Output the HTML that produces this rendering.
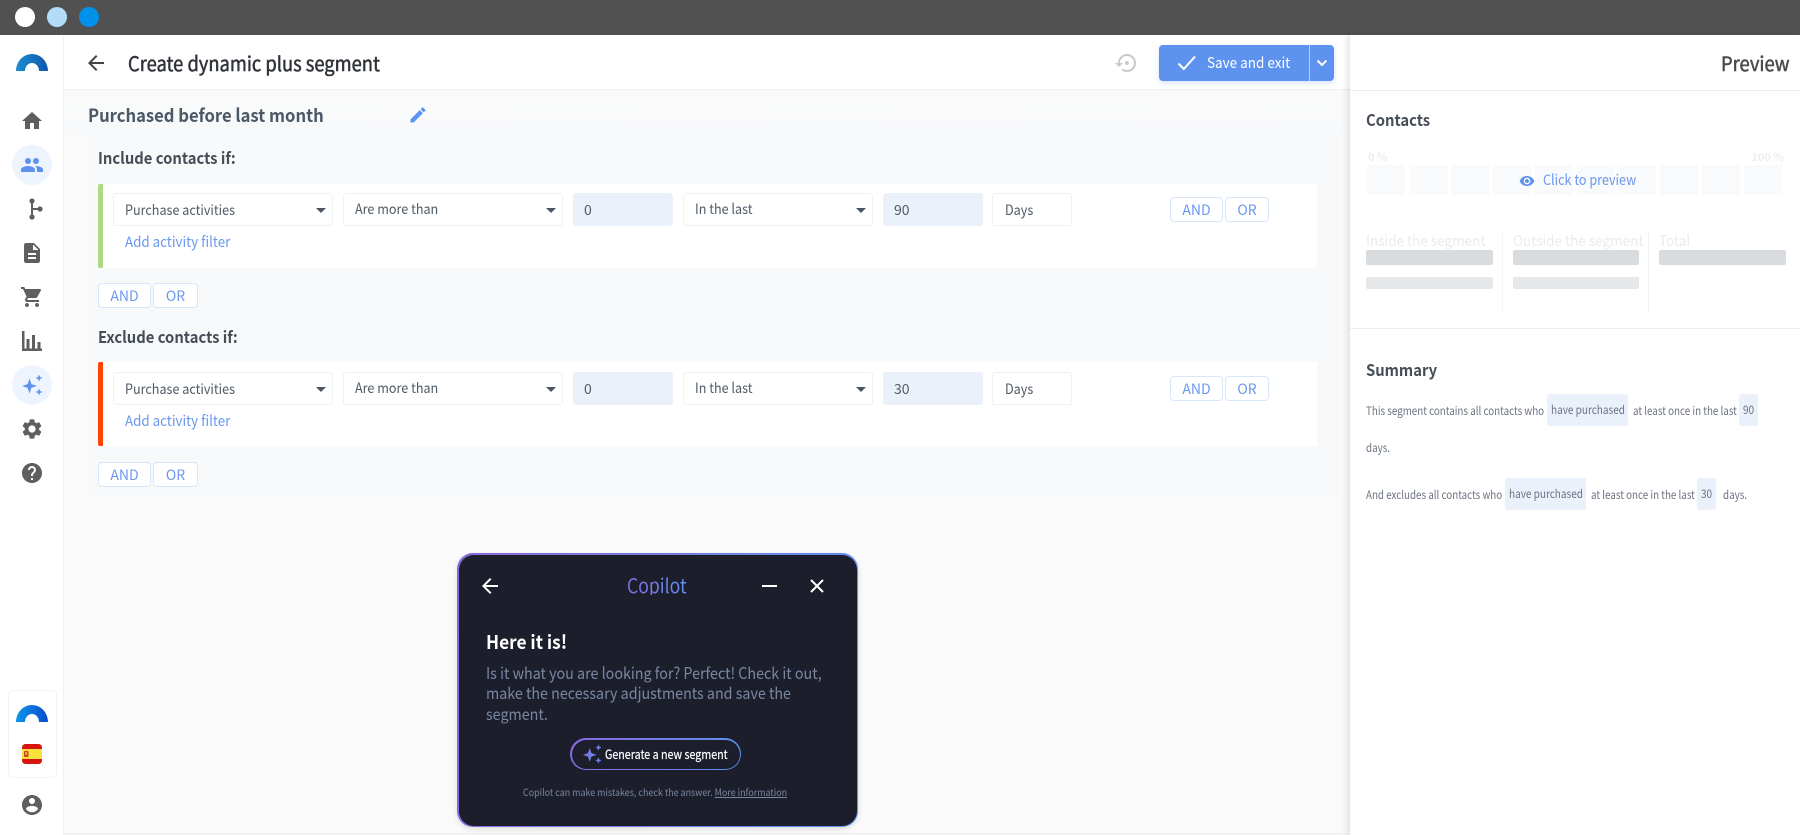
<!DOCTYPE html>
<html lang="en"><head><meta charset="utf-8"><title>Create dynamic plus segment</title>
<style>
*{box-sizing:border-box}
html,body{margin:0;padding:0;width:1800px;height:835px;overflow:hidden;background:#fafafa;font-family:"Noto Sans CJK JP","Liberation Sans",sans-serif;color:#4b5563}
.a{position:absolute}
.t{position:absolute;white-space:nowrap;line-height:20px;height:20px;transform:scaleX(var(--s,1));transform-origin:0 50%}
.r{transform-origin:100% 50%}
.sel,.inp,.days{position:absolute;height:33px;border-radius:3px;font-size:14px;line-height:33px;padding-left:11px;color:#505a66;white-space:nowrap}
.sel span,.days span,.chip span{display:inline-block;transform:scaleX(.9);transform-origin:0 50%}
.sel{background:#fff;border:1px solid #f0f1f3}
.sel.u span{position:relative;top:-1px}
.sel:after{content:"";position:absolute;right:6px;top:14px;border-left:5px solid transparent;border-right:5px solid transparent;border-top:5px solid #4a5560}
.inp{background:#ebf1fb;border:1px solid #ebf1fb;padding-left:10px}
.days{background:#fff;border:1px solid #f0f1f3;padding-left:12px}
.btn{position:absolute;height:25px;border:1px solid #d8e5fb;border-radius:4px;background:#fff;color:#6a97ee;font-size:14px;line-height:25px;text-align:center}
.add{position:absolute;color:#6a97ee;font-size:14.5px;line-height:20px;white-space:nowrap;transform:scaleX(.92);transform-origin:0 50%}
.h{font-size:16px;font-weight:700;color:#454d57;--s:.925}
.sq{position:absolute;top:165px;width:38px;height:30px;background:#f9fafc}
.chip{position:absolute;background:#ebf1fb;border-radius:2px;font-size:11.5px;line-height:32px;height:32px;color:#6b7280;padding-left:4px;white-space:nowrap}
.chip span{transform:scaleX(.87)}
.s{font-size:11.5px;color:#6b7280;--s:.852}
.lbl{font-size:15px;color:#e9ebed;--s:.9}
.md{font-weight:400;-webkit-text-stroke:.5px currentColor}
.p{font-size:16px;color:#7a86a2;--s:.893}
svg{position:absolute;display:block}
</style></head><body>

<div class="a" style="left:0;top:0;width:1800px;height:35px;background:#515151"></div>
<div class="a" style="left:15px;top:7px;width:20px;height:20px;border-radius:50%;background:#fff"></div>
<div class="a" style="left:47px;top:7px;width:20px;height:20px;border-radius:50%;background:#b3dcf9"></div>
<div class="a" style="left:79px;top:7px;width:20px;height:20px;border-radius:50%;background:#0091ea"></div>

<!-- main -->
<div class="a" style="left:63px;top:35px;width:1287px;height:55px;background:#fff;border-bottom:1px solid #eef0f2"></div>
<div class="a" style="left:88px;top:135px;width:1252px;height:362px;background:#f8f9fb"></div>
<div class="a" style="left:63px;top:90px;width:1287px;height:45px;background:linear-gradient(#fafafa,#f8f9fb)"></div>
<div class="a" style="left:63px;top:833px;width:1287px;height:2px;border-top:1px solid #eee;background:#f7f7f7"></div>

<!-- sidebar -->
<div class="a" style="left:0;top:35px;width:64px;height:800px;background:#fff;border-right:1px solid #f0f0f0"></div>
<svg style="left:16px;top:54px" width="32" height="17" viewBox="0 0 32 17"><defs><linearGradient id="l1" x1="0" x2="1" y1="0" y2="0"><stop offset="0" stop-color="#1e8ed0"/><stop offset="1" stop-color="#0f56ab"/></linearGradient></defs><path d="M0 17C0 7.600 7.200 0 16 0s16 7.600 16 17H23C23 12.600 20 9 16 9s-7 3.600-7 8z" fill="url(#l1)"/></svg>
<svg style="left:20px;top:109px" width="24" height="24" viewBox="0 0 24 24" fill="#5f5f5f"><path d="M10 20v-6h4v6h5v-8h3L12 3 2 12h3v8z"/></svg>
<div class="a" style="left:12px;top:145px;width:40px;height:40px;border-radius:50%;background:#eef4fe"></div>
<svg style="left:20px;top:153px" width="24" height="24" viewBox="0 0 24 24" fill="#5e92ee"><path d="M16 11c1.660 0 2.990-1.340 2.990-3S17.660 5 16 5c-1.660 0-3 1.340-3 3s1.340 3 3 3zm-8 0c1.660 0 2.990-1.340 2.990-3S9.660 5 8 5C6.340 5 5 6.340 5 8s1.340 3 3 3zm0 2c-2.330 0-7 1.170-7 3.500V19h14v-2.500c0-2.330-4.670-3.500-7-3.500zm8 0c-.29 0-.62.02-.97.05 1.160.84 1.970 1.970 1.970 3.450V19h6v-2.500c0-2.330-4.670-3.500-7-3.500z"/></svg>
<svg style="left:24px;top:197px" width="20" height="24" viewBox="0 0 20 24" fill="#5f5f5f"><circle cx="8" cy="4" r="2.600"/><circle cx="8" cy="20" r="2.600"/><circle cx="16" cy="12" r="2.600"/><rect x="7" y="4" width="2" height="16"/><rect x="8" y="11" width="8" height="2"/></svg>
<svg style="left:20px;top:241px" width="24" height="24" viewBox="0 0 24 24" fill="#5f5f5f"><path d="M14 2H6c-1.100 0-1.990.9-1.990 2L4 20c0 1.100.89 2 1.990 2H18c1.100 0 2-.9 2-2V8l-6-6zm2 16H8v-2h8v2zm0-4H8v-2h8v2zm-3-5V3.500L18.500 9H13z"/></svg>
<svg style="left:20px;top:285px" width="24" height="24" viewBox="0 0 24 24" fill="#5f5f5f"><path d="M7 18c-1.100 0-1.990.9-1.990 2S5.900 22 7 22s2-.9 2-2-.9-2-2-2zM1 2v2h2l3.600 7.590-1.350 2.450c-.16.28-.25.61-.25.96 0 1.100.9 2 2 2h12v-2H7.420c-.14 0-.25-.11-.25-.25l.03-.12.9-1.630h7.450c.75 0 1.410-.41 1.750-1.030l3.580-6.490c.08-.14.12-.31.12-.48 0-.55-.45-1-1-1H5.210l-.94-2H1zm16 16c-1.100 0-1.990.9-1.990 2s.89 2 1.990 2 2-.9 2-2-.9-2-2-2z"/></svg>
<svg style="left:22px;top:331px" width="20" height="20" viewBox="0 0 20 20" fill="#5f5f5f"><rect x="0" y="0" width="2.500" height="20"/><rect x="0" y="17.500" width="20" height="2.500"/><rect x="4.500" y="8" width="3" height="9.500"/><rect x="10" y="4" width="3" height="13.500"/><rect x="15.500" y="11" width="3" height="6.500"/></svg>
<div class="a" style="left:12px;top:365px;width:40px;height:40px;border-radius:50%;background:#eef4fe"></div>
<svg style="left:20px;top:373px" width="24" height="24" viewBox="0 0 24 24" fill="#5e92ee"><path d="M9.500 5.500L11.400 11.100 17 13 11.400 14.900 9.500 20.500 7.600 14.900 2 13 7.600 11.100z"/><path d="M19 1.500L20 4 22.500 5 20 6 19 8.500 18 6 15.500 5 18 4z"/><path d="M19 15.500L20 18 22.500 19 20 20 19 22.500 18 20 15.500 19 18 18z"/></svg>
<svg style="left:20px;top:417px" width="24" height="24" viewBox="0 0 24 24" fill="#5f5f5f"><path d="M19.140,12.940c0.040-0.300,0.060-0.610,0.060-0.940c0-0.320-0.020-0.640-0.070-0.940l2.030-1.580c0.180-0.140,0.230-0.410,0.120-0.610l-1.920-3.320c-0.120-0.220-0.370-0.290-0.590-0.220l-2.390,0.960c-0.500-0.380-1.030-0.700-1.620-0.940L14.400,2.810c-0.040-0.240-0.240-0.410-0.480-0.410h-3.840c-0.240,0-0.430,0.170-0.470,0.410L9.250,5.350C8.660,5.590,8.120,5.920,7.630,6.290L5.240,5.330c-0.220-0.080-0.470,0-0.590,0.220L2.740,8.870C2.620,9.080,2.660,9.340,2.860,9.480l2.030,1.580C4.840,11.360,4.800,11.690,4.800,12s0.020,0.640,0.070,0.940l-2.030,1.580c-0.180,0.140-0.230,0.410-0.120,0.610l1.920,3.320c0.120,0.220,0.370,0.290,0.590,0.220l2.390-0.960c0.500,0.380,1.030,0.700,1.620,0.940l0.360,2.540c0.050,0.240,0.240,0.410,0.480,0.410h3.840c0.240,0,0.440-0.170,0.470-0.410l0.360-2.540c0.590-0.240,1.130-0.560,1.620-0.940l2.390,0.960c0.220,0.080,0.470,0,0.590-0.220l1.920-3.320c0.120-0.220,0.070-0.470-0.120-0.610L19.140,12.940z M12,15.600c-1.980,0-3.600-1.620-3.600-3.600s1.620-3.600,3.600-3.600s3.600,1.620,3.600,3.600S13.980,15.600,12,15.600z"/></svg>
<svg style="left:20px;top:461px" width="24" height="24" viewBox="0 0 24 24" fill="#5f5f5f"><path d="M12 2C6.480 2 2 6.480 2 12s4.480 10 10 10 10-4.480 10-10S17.520 2 12 2zm1 17h-2v-2h2v2zm2.070-7.750l-.9.920C13.450 12.900 13 13.500 13 15h-2v-.5c0-1.100.45-2.100 1.170-2.830l1.240-1.260c.37-.36.59-.86.59-1.410 0-1.100-.9-2-2-2s-2 .9-2 2H8c0-2.210 1.790-4 4-4s4 1.790 4 4c0 .88-.36 1.680-.93 2.250z"/></svg>

<div class="a" style="left:8px;top:690px;width:49px;height:88px;border:1px solid #f3f3f3;border-radius:5px;background:#fff"></div>
<svg style="left:16px;top:705px" width="32" height="17" viewBox="0 0 32 17"><defs><linearGradient id="l2" x1="0" x2="1" y1="0" y2="0"><stop offset="0" stop-color="#0d96ec"/><stop offset="1" stop-color="#0a4ccb"/></linearGradient></defs><path d="M0 17C0 7.600 7.200 0 16 0s16 7.600 16 17H23C23 12.600 20 9 16 9s-7 3.600-7 8z" fill="url(#l2)"/></svg>
<svg style="left:22px;top:744px" width="20" height="20" viewBox="0 0 20 20"><rect width="20" height="20" rx="3.500" fill="#d8140f"/><rect y="5" width="20" height="10" fill="#fbe23a"/><rect x="2" y="7" width="4.500" height="6" rx="1" fill="#c8402a"/><rect x="3.200" y="8" width="2" height="3" fill="#e8b23a"/></svg>
<svg style="left:20px;top:793px" width="24" height="24" viewBox="0 0 24 24" fill="#5f5f5f"><path d="M12 2C6.480 2 2 6.480 2 12s4.480 10 10 10 10-4.480 10-10S17.520 2 12 2zm0 3c1.660 0 3 1.340 3 3s-1.340 3-3 3-3-1.340-3-3 1.340-3 3-3zm0 14.200c-2.500 0-4.710-1.280-6-3.220.03-1.990 4-3.080 6-3.080 1.990 0 5.970 1.090 6 3.080-1.290 1.940-3.500 3.220-6 3.220z"/></svg>

<!-- header -->
<svg style="left:84px;top:51px" width="24" height="24" viewBox="0 0 24 24" fill="#444"><path d="M20 11H7.830l5.590-5.590L12 4l-8 8 8 8 1.410-1.410L7.830 13H20v-2z"/></svg>
<div class="t md" style="left:128px;top:53px;font-size:20px;color:#2f3338;--s:.917">Create dynamic plus segment</div>
<svg style="left:1115px;top:51px" width="24" height="24" viewBox="0 0 24 24" fill="#c9c9c9"><path d="M14 12c0-1.100-.9-2-2-2s-2 .9-2 2 .9 2 2 2 2-.9 2-2zm-2-9c-4.970 0-9 4.030-9 9H0l4 4 4-4H5c0-3.870 3.130-7 7-7s7 3.130 7 7-3.130 7-7 7c-1.510 0-2.910-.49-4.060-1.300l-1.420 1.440C8.040 20.300 9.940 21 12 21c4.970 0 9-4.030 9-9s-4.030-9-9-9z"/></svg>
<div class="a" style="left:1159px;top:45px;width:175px;height:36px;border-radius:4px;background:#5d92ee;box-shadow:0 2px 6px rgba(93,146,238,.25)"></div>
<div class="a" style="left:1309px;top:45px;width:1px;height:36px;background:#b9cff7"></div>
<svg style="left:1177px;top:54px" width="20" height="18" viewBox="0 0 20 18" fill="none" stroke="#fff" stroke-width="2"><path d="M1.500 9.500L6.800 15 18 2.500"/></svg>
<div class="t" style="left:1207px;top:53px;font-size:15px;color:#fff;--s:.9">Save and exit</div>
<svg style="left:1316px;top:59px" width="12" height="8" viewBox="0 0 12 8" fill="none" stroke="#fff" stroke-width="2"><path d="M1.500 1.500L6 6l4.500-4.500"/></svg>

<div class="t" style="left:88px;top:105px;font-size:18px;font-weight:700;color:#4b5866;--s:.923">Purchased before last month</div>
<svg style="left:408px;top:105px" width="20" height="20" viewBox="0 0 24 24" fill="#5e92ee"><path d="M3 17.250V21h3.750L17.810 9.940l-3.750-3.750L3 17.250zM20.710 7.040c.39-.39.39-1.020 0-1.410l-2.340-2.340c-.39-.39-1.020-.39-1.410 0l-1.830 1.830 3.750 3.750 1.830-1.830z"/></svg>

<!-- include -->
<div class="t h" style="left:98px;top:147px">Include contacts if:</div>
<div class="a" style="left:98px;top:184px;width:1219px;height:84px;background:#fff"></div>
<div class="a" style="left:98px;top:184px;width:5px;height:84px;background:#b1d982;border-radius:2px 0 0 2px"></div>
<div class="sel" style="left:113px;top:193px;width:220px"><span>Purchase activities</span></div>
<div class="sel u" style="left:343px;top:193px;width:220px"><span>Are more than</span></div>
<div class="inp" style="left:573px;top:193px;width:100px">0</div>
<div class="sel u" style="left:683px;top:193px;width:190px"><span>In the last</span></div>
<div class="inp" style="left:883px;top:193px;width:100px">90</div>
<div class="days" style="left:992px;top:193px;width:80px"><span>Days</span></div>
<div class="btn" style="left:1170px;top:197px;width:53px">AND</div>
<div class="btn" style="left:1225px;top:197px;width:44px">OR</div>
<div class="add" style="left:125px;top:232px">Add activity filter</div>
<div class="btn" style="left:98px;top:283px;width:53px">AND</div>
<div class="btn" style="left:153px;top:283px;width:45px">OR</div>

<!-- exclude -->
<div class="t h" style="left:98px;top:326px">Exclude contacts if:</div>
<div class="a" style="left:98px;top:362px;width:1219px;height:84px;background:#fff"></div>
<div class="a" style="left:98px;top:362px;width:5px;height:84px;background:#ff4405;border-radius:2px 0 0 2px"></div>
<div class="sel" style="left:113px;top:372px;width:220px"><span>Purchase activities</span></div>
<div class="sel u" style="left:343px;top:372px;width:220px"><span>Are more than</span></div>
<div class="inp" style="left:573px;top:372px;width:100px">0</div>
<div class="sel u" style="left:683px;top:372px;width:190px"><span>In the last</span></div>
<div class="inp" style="left:883px;top:372px;width:100px">30</div>
<div class="days" style="left:992px;top:372px;width:80px"><span>Days</span></div>
<div class="btn" style="left:1170px;top:376px;width:53px">AND</div>
<div class="btn" style="left:1225px;top:376px;width:44px">OR</div>
<div class="add" style="left:125px;top:411px">Add activity filter</div>
<div class="btn" style="left:98px;top:462px;width:53px">AND</div>
<div class="btn" style="left:153px;top:462px;width:45px">OR</div>

<!-- preview panel -->
<div class="a" style="left:1350px;top:35px;width:450px;height:800px;background:#fff;box-shadow:-3px 0 6px rgba(0,0,0,.1)"></div>
<div class="a" style="left:1350px;top:90px;width:450px;height:1px;background:#eceef0"></div>
<div class="t md r" style="right:10px;top:53px;font-size:20px;color:#4a4a4a;--s:.92">Preview</div>
<div class="t h" style="left:1366px;top:109px">Contacts</div>
<div class="t" style="left:1368px;top:147px;font-size:11px;font-weight:700;color:#eceded">0 %</div>
<div class="t r" style="right:16px;top:147px;font-size:11px;font-weight:700;color:#eceded">100 %</div>
<div class="sq" style="left:1367px"></div><div class="sq" style="left:1410px"></div><div class="sq" style="left:1451px"></div><div class="sq" style="left:1493px"></div><div class="sq" style="left:1535px"></div><div class="sq" style="left:1577px"></div><div class="sq" style="left:1618px"></div><div class="sq" style="left:1660px"></div><div class="sq" style="left:1702px"></div><div class="sq" style="left:1744px"></div>
<svg style="left:1519px;top:173px" width="16" height="16" viewBox="0 0 24 24" fill="#5e92ee"><path d="M12 4.500C7 4.500 2.730 7.610 1 12c1.730 4.390 6 7.500 11 7.500s9.270-3.110 11-7.500c-1.730-4.390-6-7.500-11-7.500zM12 17c-2.760 0-5-2.240-5-5s2.240-5 5-5 5 2.240 5 5-2.240 5-5 5zm0-8c-1.660 0-3 1.340-3 3s1.340 3 3 3 3-1.340 3-3-1.340-3-3-3z"/></svg>
<div class="t" style="left:1543px;top:170px;font-size:14.5px;color:#6a97ee;--s:.87">Click to preview</div>

<div class="t lbl" style="left:1366px;top:231px">Inside the segment</div>
<div class="t lbl" style="left:1513px;top:231px">Outside the segment</div>
<div class="t lbl" style="left:1659px;top:231px">Total</div>
<div class="a" style="left:1366px;top:250px;width:127px;height:15px;background:#d9dcdf;border-radius:2px"></div>
<div class="a" style="left:1513px;top:250px;width:126px;height:15px;background:#d9dcdf;border-radius:2px"></div>
<div class="a" style="left:1659px;top:250px;width:127px;height:15px;background:#d9dcdf;border-radius:2px"></div>
<div class="a" style="left:1366px;top:277px;width:127px;height:12px;background:#e6e7e9;border-radius:2px"></div>
<div class="a" style="left:1513px;top:277px;width:126px;height:12px;background:#e6e7e9;border-radius:2px"></div>
<div class="a" style="left:1502px;top:232px;width:1px;height:80px;background:#f3f4f5"></div>
<div class="a" style="left:1648px;top:232px;width:1px;height:80px;background:#f3f4f5"></div>
<div class="a" style="left:1350px;top:328px;width:450px;height:1px;background:#eceef0"></div>

<div class="t h" style="left:1366px;top:359px">Summary</div>
<div class="t s" style="left:1366px;top:401px">This segment contains all contacts who</div>
<div class="chip" style="left:1547px;top:394px;width:81px"><span>have purchased</span></div>
<div class="t s" style="left:1633px;top:401px">at least once in the last</div>
<div class="chip" style="left:1739px;top:394px;width:19px"><span>90</span></div>
<div class="t s" style="left:1366px;top:438px">days.</div>
<div class="t s" style="left:1366px;top:485px">And excludes all contacts who</div>
<div class="chip" style="left:1505px;top:478px;width:81px"><span>have purchased</span></div>
<div class="t s" style="left:1591px;top:485px">at least once in the last</div>
<div class="chip" style="left:1697px;top:478px;width:19px"><span>30</span></div>
<div class="t s" style="left:1723px;top:485px">days.</div>

<!-- copilot -->
<div class="a" style="left:457px;top:553px;width:401px;height:274px;border-radius:16px;padding:1.5px;background:linear-gradient(100deg,#8a68d8,#5d92ee);box-shadow:0 2px 6px rgba(0,0,0,.12)"><div style="width:100%;height:100%;border-radius:15px;background:#1c1f2b"></div></div>
<svg style="left:478px;top:574px" width="24" height="24" viewBox="0 0 24 24" fill="#fff"><path d="M20 11H7.830l5.590-5.590L12 4l-8 8 8 8 1.410-1.410L7.830 13H20v-2z"/></svg>
<div class="t" style="left:627px;top:575px;font-size:20px;--s:.88;background:linear-gradient(90deg,#8a68e0,#5d92ee);-webkit-background-clip:text;background-clip:text;color:transparent">Copilot</div>
<div class="a" style="left:762px;top:585px;width:15px;height:2px;background:#fff"></div>
<svg style="left:809px;top:578px" width="16" height="16" viewBox="0 0 16 16" fill="none" stroke="#fff" stroke-width="2"><path d="M2 2l12 12M14 2L2 14"/></svg>
<div class="t" style="left:486px;top:632px;font-size:19px;font-weight:700;color:#fff;--s:.91">Here it is!</div>
<div class="t p" style="left:486px;top:662px">Is it what you are looking for? Perfect! Check it out,</div>
<div class="t p" style="left:486px;top:682px">make the necessary adjustments and save the</div>
<div class="t p" style="left:486px;top:703px">segment.</div>
<div class="a" style="left:570px;top:738px;width:171px;height:32px;border-radius:16px;padding:1.5px;background:linear-gradient(90deg,#8a68e0,#5d92ee)"><div style="width:100%;height:100%;border-radius:15px;background:#1c1f2b"></div></div>
<svg style="left:581px;top:743px" width="22" height="22" viewBox="0 0 24 24"><defs><linearGradient id="sp" x1="0" x2="1" y1="0" y2="0"><stop offset="0" stop-color="#8a68e0"/><stop offset="1" stop-color="#5d92ee"/></linearGradient></defs><path fill="url(#sp)" d="M9.500 5.500L11.400 11.100 17 13 11.400 14.900 9.500 20.500 7.600 14.900 2 13 7.600 11.100z"/><path fill="url(#sp)" d="M19 1.500L20 4 22.500 5 20 6 19 8.500 18 6 15.500 5 18 4z"/><path fill="url(#sp)" d="M19 15.500L20 18 22.500 19 20 20 19 22.500 18 20 15.500 19 18 18z"/></svg>
<div class="t" style="left:605px;top:744px;font-size:12.5px;color:#fff;-webkit-text-stroke:.2px #fff;--s:.855">Generate a new segment</div>
<div class="t" style="left:523px;top:782px;font-size:10px;color:#7a86a2;--s:.893">Copilot can make mistakes, check the answer. <u>More information</u></div>

</body></html>
